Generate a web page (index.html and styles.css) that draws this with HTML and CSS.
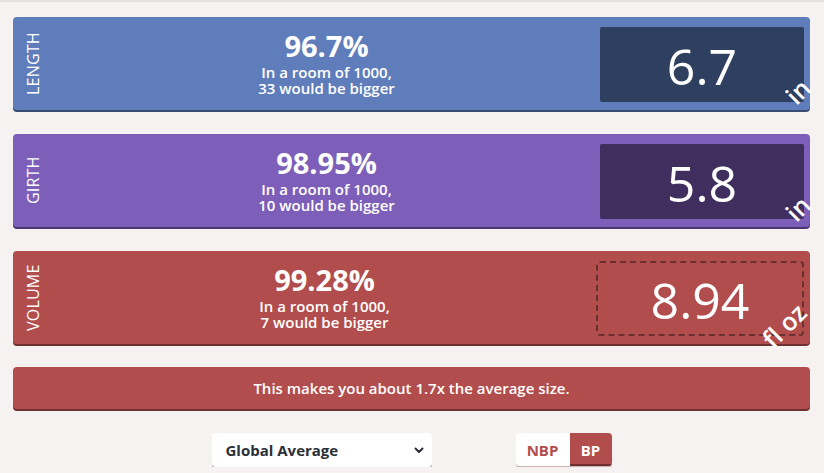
FILE: index.html
```html
<!DOCTYPE html>
<html>
<head>
  <title>Size Results</title>
  <link rel="stylesheet" href="styles.css">
</head>
<body>
  <div class="results">
    <div class="stat stat-length">
      <div class="stat-label">LENGTH</div>
      <div class="stat-info">
        <div class="stat-pct">96.7%</div>
        <div class="stat-room">In a room of 1000,</div>
        <div class="stat-room">33 would be bigger</div>
      </div>
      <div class="stat-value">
        <span class="stat-num">6.7</span>
        <span class="stat-unit">in</span>
      </div>
    </div>

    <div class="stat stat-girth">
      <div class="stat-label">GIRTH</div>
      <div class="stat-info">
        <div class="stat-pct">98.95%</div>
        <div class="stat-room">In a room of 1000,</div>
        <div class="stat-room">10 would be bigger</div>
      </div>
      <div class="stat-value">
        <span class="stat-num">5.8</span>
        <span class="stat-unit">in</span>
      </div>
    </div>

    <div class="stat stat-volume">
      <div class="stat-label">VOLUME</div>
      <div class="stat-info">
        <div class="stat-pct">99.28%</div>
        <div class="stat-room">In a room of 1000,</div>
        <div class="stat-room">7 would be bigger</div>
      </div>
      <div class="stat-value">
        <span class="stat-num">8.94</span>
        <span class="stat-unit">fl oz</span>
      </div>
    </div>

    <div class="summary">This makes you about 1.7x the average size.</div>

    <div class="controls">
      <div class="select-wrap">
        <select id="dataset" name="dataset">
          <option>Global Average</option>
          <option>North America</option>
          <option>Europe</option>
        </select>
        <svg class="chevron" width="10" height="7" viewBox="0 0 10 7">
          <path d="M1.5 1.5 L5 5 L8.5 1.5" fill="none" stroke="#2b2f36" stroke-width="2" stroke-linecap="round" stroke-linejoin="round"/>
        </svg>
      </div>
      <div class="toggle">
        <button type="button" class="toggle-btn">NBP</button>
        <button type="button" class="toggle-btn active">BP</button>
      </div>
    </div>
  </div>
</body>
</html>
```

FILE: styles.css
```css
body {
  margin: 0;
  background-color: #f5f2f1;
  border-top: 2px solid #e3e1e0;
  font-family: "Open Sans", "Noto Sans", sans-serif;
  color: white;
}
.results {
  padding: 15px 14px 0 13px;
}
.stat {
  display: flex;
  height: 93px;
  margin-bottom: 24px;
  border-radius: 4px;
}
.stat-length {
  background-color: #5f7dba;
  box-shadow: 0 2px 0 #3a4c72;
}
.stat-girth {
  background-color: #7d5eb9;
  box-shadow: 0 2px 0 #4b3670;
}
.stat-volume {
  background-color: #b24d4d;
  box-shadow: 0 2px 0 #6e3030;
}
.stat-label {
  width: 40px;
  display: flex;
  align-items: center;
  justify-content: center;
  writing-mode: vertical-rl;
  transform: rotate(180deg);
  font-size: 16px;
  letter-spacing: 0.2px;
}
.stat-info {
  flex: 1;
  display: flex;
  flex-direction: column;
  align-items: center;
  justify-content: center;
  text-align: center;
  padding-bottom: 4px;
}
.stat-pct {
  font-size: 29px;
  font-weight: bold;
  line-height: 36px;
}
.stat-room {
  font-size: 15px;
  font-weight: 600;
  line-height: 16px;
}
.stat-value {
  position: relative;
  width: 204px;
  margin: 10px 6px 8px 0;
  display: flex;
  align-items: center;
  justify-content: center;
  border-radius: 2px;
}
.stat-length .stat-value {
  background-color: #2f3f5f;
}
.stat-girth .stat-value {
  background-color: #402f5e;
}
.stat-volume .stat-value {
  border: 2px dashed #6a2f2f;
  border-radius: 4px;
}
.stat-num {
  font-size: 50px;
  line-height: 1;
  padding-top: 2px;
}
.stat-unit {
  position: absolute;
  right: -5px;
  bottom: 1px;
  font-size: 25px;
  font-weight: 600;
  line-height: 20px;
  transform: rotate(-45deg);
}
.stat-volume .stat-unit {
  right: -7px;
  bottom: -1px;
}
.summary {
  height: 42px;
  margin-top: -1px;
  display: flex;
  align-items: center;
  justify-content: center;
  background-color: #b24d4d;
  box-shadow: 0 2px 0 #6e3030;
  border-radius: 4px;
  font-size: 15px;
  font-weight: 600;
}
.controls {
  display: flex;
  justify-content: center;
  gap: 84px;
  margin-top: 24px;
}
.select-wrap {
  position: relative;
}
select {
  appearance: none;
  width: 220px;
  height: 34px;
  padding: 0 14px;
  border: none;
  border-radius: 4px;
  background-color: white;
  box-shadow: 0 2px 0 #b3a9a8;
  font-family: "Open Sans", "Noto Sans", sans-serif;
  font-size: 15px;
  font-weight: bold;
  color: #2b2f36;
}
.chevron {
  position: absolute;
  right: 8px;
  top: 14px;
  pointer-events: none;
}
.toggle {
  display: flex;
  height: 33px;
  border-radius: 4px;
  overflow: hidden;
  box-shadow: 0 2px 0 #c9b2b2;
}
.toggle-btn {
  border: none;
  padding: 0;
  background-color: white;
  color: #b24d4d;
  font-family: "Open Sans", "Noto Sans", sans-serif;
  font-size: 15px;
  font-weight: bold;
  width: 54px;
  cursor: pointer;
}
.toggle-btn.active {
  width: 42px;
  background-color: #b24d4d;
  color: white;
  box-shadow: inset 0 -2px 0 #6e3030;
}
```
